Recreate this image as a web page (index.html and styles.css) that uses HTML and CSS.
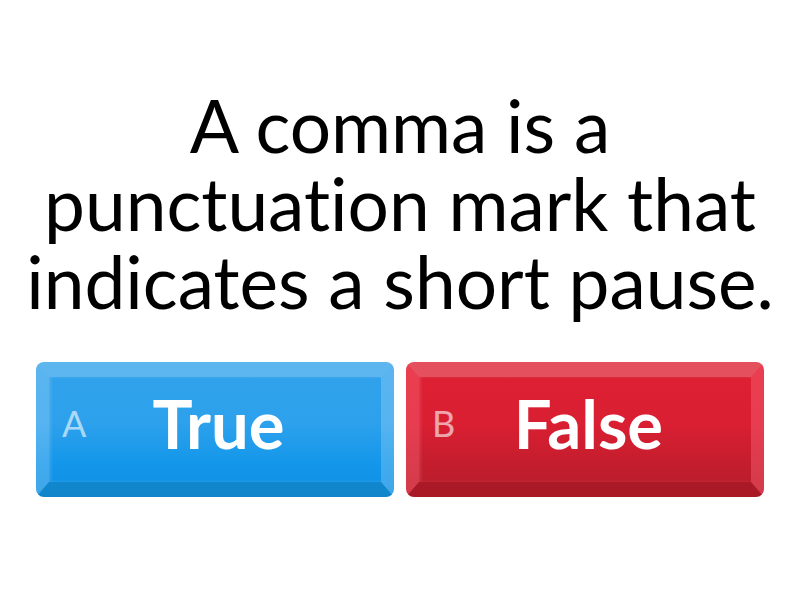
FILE: index.html
```
<!DOCTYPE html>
<html lang="en">
<head>
    <meta charset="utf-8">
    <title>Quiz</title>
    <link rel="stylesheet" href="styles.css">
</head>
<body>
    <main class="quiz">
        <h1 class="question">A comma is a punctuation mark that indicates a short pause.</h1>

        <div class="answers">
            <button type="button" class="answer blue">
                <span class="letter">A</span>
                <span class="text">True</span>
            </button>
            <button type="button" class="answer red">
                <span class="letter">B</span>
                <span class="text">False</span>
            </button>
        </div>
    </main>
</body>
</html>
```
FILE: styles.css
```
body {
    margin: 0;
    background-color: #FFF;
    font-family: Lato, "Noto Sans", sans-serif;
}

.quiz {
    display: flex;
    flex-direction: column;
    gap: 42px;
    padding: 86px 12px 24px;
}

.question {
    margin: 0;
    color: #000;
    font-size: 73px;
    font-weight: normal;
    font-variant-ligatures: none;
    line-height: 78px;
    text-align: center;
}

.answers {
    display: grid;
    grid-template-columns: 1fr 1fr;
    gap: 12px;
    padding: 0 24px;
}

.answer {
    display: flex;
    align-items: center;
    min-height: 135px;
    padding: 0 34px 14px 13px;
    border-style: solid;
    border-width: 15px 13px;
    border-radius: 8px;
    background-origin: border-box;
    color: #FFF;
    font-family: inherit;
    cursor: pointer;
}

/* bevel: light on top and sides, dark at the bottom */
.blue {
    border-color: rgba(255, 255, 255, 0.22) rgba(255, 255, 255, 0.2) rgba(20, 110, 150, 0.3);
    background-image: linear-gradient(#31A2EB 0%, #2DA1EC 45%, #1497EA 75%, #0D8FE3 100%);
    box-shadow: inset 2px 0 3px rgba(255, 255, 255, 0.15);
}

.red {
    border-color: rgba(255, 255, 255, 0.22) rgba(255, 110, 130, 0.38) rgba(140, 20, 30, 0.35);
    background-image: linear-gradient(#DE2032 0%, #DA1F32 45%, #C11D2D 80%, #B71C2B 100%);
    box-shadow: inset 2px 0 3px rgba(255, 255, 255, 0.12);
}

.letter {
    flex: none;
    width: 28px;
    font-size: 36px;
    line-height: 44px;
    text-align: left;
    opacity: 0.6;
}

.text {
    flex: 1;
    font-size: 67px;
    font-weight: bold;
    line-height: 78px;
}
```
